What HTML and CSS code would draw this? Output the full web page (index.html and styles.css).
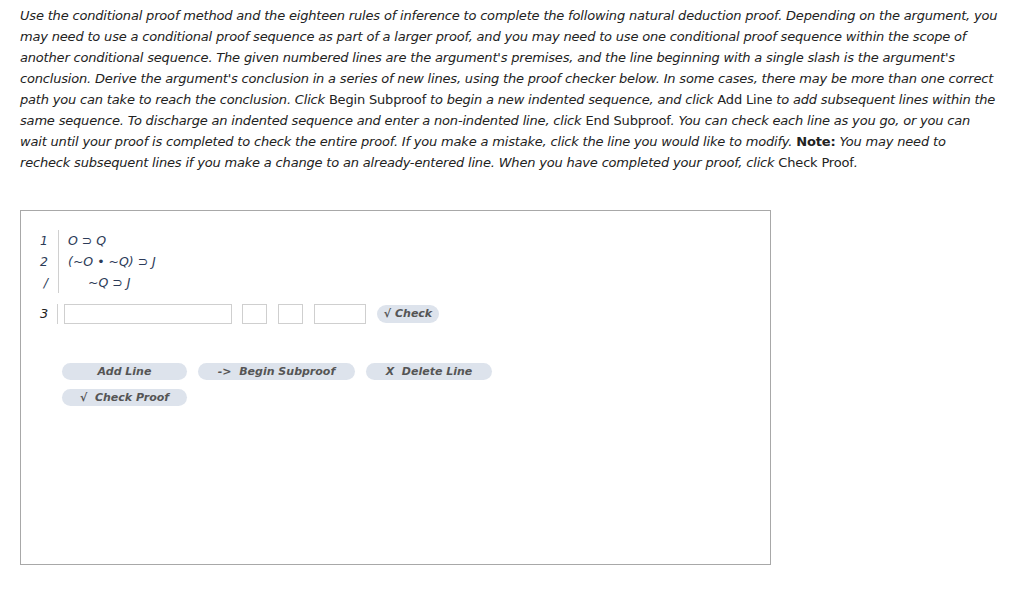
FILE: index.html
```html
<!DOCTYPE html>
<html>
<head>
<meta charset="utf-8">
<link rel="stylesheet" href="styles.css">
</head>
<body>
<p class="intro">Use the conditional proof method and the eighteen rules of inference to complete the following natural deduction proof. Depending on the argument, you<br>may need to use a conditional proof sequence as part of a larger proof, and you may need to use one conditional proof sequence within the scope of<br>another conditional sequence. The given numbered lines are the argument's premises, and the line beginning with a single slash is the argument's<br>conclusion. Derive the argument's conclusion in a series of new lines, using the proof checker below. In some cases, there may be more than one correct<br>path you can take to reach the conclusion. Click <span class="up">Begin Subproof</span> to begin a new indented sequence, and click <span class="up">Add Line</span> to add subsequent lines within the<br>same sequence. To discharge an indented sequence and enter a non-indented line, click <span class="up">End Subproof</span>. You can check each line as you go, or you can<br>wait until your proof is completed to check the entire proof. If you make a mistake, click the line you would like to modify. <b class="up">Note:</b> You may need to<br>recheck subsequent lines if you make a change to an already-entered line. When you have completed your proof, click <span class="up">Check Proof</span>.</p>

<div class="box">
  <div class="premises">
    <div class="nums">
      <div class="row">1</div>
      <div class="row">2</div>
      <div class="row">/</div>
    </div>
    <div class="formulas">
      <div class="row">O ⊃ Q</div>
      <div class="row">(~O • ~Q) ⊃ J</div>
      <div class="row concl">~Q ⊃ J</div>
    </div>
  </div>

  <div class="entry">
    <div class="num3">3</div>
    <div class="fields">
      <span class="field f-main"></span>
      <span class="field f-sm"></span>
      <span class="field f-sm"></span>
      <span class="field f-md"></span>
      <span class="btn b-check">√ Check</span>
    </div>
  </div>

  <div class="actions">
    <div class="act-row">
      <span class="btn b-add">Add Line</span>
      <span class="btn b-sub">-&gt;&nbsp; Begin Subproof</span>
      <span class="btn b-del">X&nbsp; Delete Line</span>
    </div>
    <div class="act-row">
      <span class="btn b-add">√&nbsp; Check Proof</span>
    </div>
  </div>
</div>
</body>
</html>
```

FILE: styles.css
```css
html, body {
  margin: 0;
  padding: 0;
  background: #fff;
}
body {
  font-family: "DejaVu Sans", Verdana, sans-serif;
  color: #222;
}
.intro {
  margin: 0;
  padding: 5px 0 0 20px;
  font-size: 13px;
  line-height: 21px;
  font-style: italic;
  letter-spacing: -0.18px;
  white-space: nowrap;
  color: #222;
}
.up {
  font-style: normal;
}
.box {
  margin: 37px 0 0 20px;
  width: 751px;
  height: 355px;
  box-sizing: border-box;
  border: 1px solid #a8a8a8;
  padding-top: 19px;
}
.premises {
  display: flex;
  margin-left: 19px;
  font-size: 12.5px;
  font-style: italic;
  color: #2c3b58;
}
.row {
  height: 21px;
  line-height: 21px;
  white-space: nowrap;
}
.nums {
  width: 8px;
  padding-right: 10px;
  text-align: right;
  border-right: 1px solid #d0d0d0;
}
.formulas {
  padding-left: 9px;
}
.concl {
  padding-left: 20px;
}
.entry {
  display: flex;
  align-items: center;
  margin-top: 11px;
  margin-left: 19px;
}
.num3 {
  width: 8px;
  padding-right: 9px;
  text-align: right;
  font-size: 13px;
  font-style: italic;
  color: #222;
  border-right: 1px solid #d0d0d0;
  height: 20px;
  line-height: 20px;
}
.fields {
  display: flex;
  align-items: center;
  margin-left: 6px;
}
.field {
  display: block;
  height: 20px;
  box-sizing: border-box;
  border: 1px solid #cfcfcf;
  background: #fff;
}
.f-main { width: 168px; margin-right: 10px; }
.f-sm { width: 25px; margin-right: 11px; }
.f-md { width: 52px; margin-right: 11px; }
.btn {
  display: inline-block;
  box-sizing: border-box;
  height: 17px;
  line-height: 17px;
  border-radius: 9px;
  background: #dde3ec;
  color: #555;
  font-size: 11px;
  font-weight: bold;
  font-style: italic;
  text-align: center;
  white-space: nowrap;
}
.b-check {
  width: 62px;
  height: 18px;
  line-height: 18px;
}
.actions {
  margin-top: 39px;
  margin-left: 41px;
  display: flex;
  flex-direction: column;
  gap: 9px;
}
.act-row {
  display: flex;
  gap: 11px;
}
.b-add { width: 125px; }
.b-sub { width: 157px; }
.b-del { width: 126px; }
```
